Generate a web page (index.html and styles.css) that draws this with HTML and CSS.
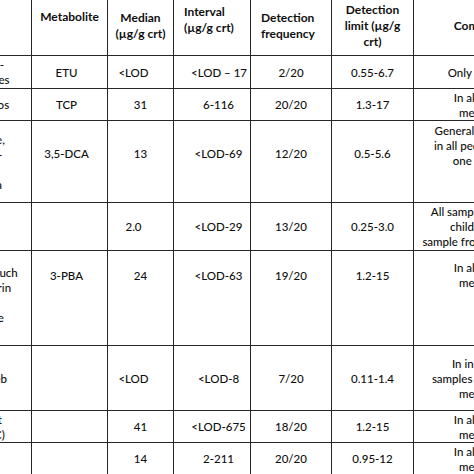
FILE: index.html
```html
<!DOCTYPE html>
<html>
<head>
<meta charset="utf-8">
<link rel="stylesheet" href="styles.css">
</head>
<body>
<table class="results">
  <colgroup>
    <col class="c-source"><col class="c-metab"><col class="c-median"><col class="c-interval"><col class="c-freq"><col class="c-limit"><col class="c-note">
  </colgroup>
  <thead>
    <tr class="head">
      <th class="lead">Pesticide</th>
      <th class="h-top">Metabolite</th>
      <th>Median<br>(µg/g crt)</th>
      <th class="h-interval">Interval<br>(µg/g crt)</th>
      <th class="h-freq">Detection<br>frequency</th>
      <th>Detection<br>limit (µg/g<br>crt)</th>
      <th class="note">Comments</th>
    </tr>
  </thead>
  <tbody>
    <tr class="r1">
      <td class="lead">Ethylenebis-di-<br>dithiocarbamates</td>
      <td class="metab">ETU</td>
      <td class="median-lod">&lt;LOD</td>
      <td class="interval">&lt;LOD – 17</td>
      <td>2/20</td>
      <td>0.55-6.7</td>
      <td class="note">Only in adults</td>
    </tr>
    <tr class="r2">
      <td class="lead lead-shift">Chlorpyrifos</td>
      <td class="metab">TCP</td>
      <td>31</td>
      <td class="interval">6-116</td>
      <td>20/20</td>
      <td>1.3-17</td>
      <td class="note">In all family<br>members</td>
    </tr>
    <tr class="r3">
      <td class="lead">a procymidone,<br>and vinclozoli-<br>n, used<br>in Scandinavia</td>
      <td class="metab">3,5-DCA</td>
      <td>13</td>
      <td class="interval">&lt;LOD-69</td>
      <td>12/20</td>
      <td>0.5-5.6</td>
      <td class="note">Generally detected<br>in all people except<br>one person.</td>
    </tr>
    <tr class="r4">
      <td class="lead"></td>
      <td class="metab"></td>
      <td class="median-lod">2.0</td>
      <td class="interval">&lt;LOD-29</td>
      <td>13/20</td>
      <td>0.25-3.0</td>
      <td class="note">All samples from the<br>children, one<br>sample from one parent</td>
    </tr>
    <tr class="r5">
      <td class="lead">the pyrethroids such<br>as a cypermethrin<br>etc. are<br>is in the source</td>
      <td class="metab">3-PBA</td>
      <td>24</td>
      <td class="interval">&lt;LOD-63</td>
      <td>19/20</td>
      <td>1.2-15</td>
      <td class="note">In all family<br>members</td>
    </tr>
    <tr class="r6">
      <td class="lead">and/or propineb</td>
      <td class="metab"></td>
      <td class="median-lod">&lt;LOD</td>
      <td class="interval">&lt;LOD-8</td>
      <td>7/20</td>
      <td>0.11-1.4</td>
      <td class="note">In individual<br>samples from family<br>members</td>
    </tr>
    <tr class="r7">
      <td class="lead">In the product<br>(excl. the pTCC)</td>
      <td class="metab"></td>
      <td>41</td>
      <td class="interval">&lt;LOD-675</td>
      <td>18/20</td>
      <td>1.2-15</td>
      <td class="note">In all family<br>members</td>
    </tr>
    <tr class="r8">
      <td class="lead"></td>
      <td class="metab"></td>
      <td>14</td>
      <td class="interval">2-211</td>
      <td>20/20</td>
      <td>0.95-12</td>
      <td class="note">In all family<br>members</td>
    </tr>
  </tbody>
</table>
</body>
</html>
```
FILE: styles.css
```css
html, body {
  margin: 0;
  padding: 0;
  background: #ffffff;
  overflow: hidden;
}

.results {
  border-collapse: collapse;
  table-layout: fixed;
  width: 651px;
  margin: -5px 0 0 -100px;
  font-family: Lato, "Open Sans", sans-serif;
  font-size: 11.5px;
  font-weight: 500;
  color: #0f0f0f;
}

.c-source { width: 131px; }
.c-metab { width: 76px; }
.c-median { width: 66px; }
.c-interval { width: 77px; }
.c-freq { width: 81px; }
.c-limit { width: 82px; }
.c-note { width: 138px; }

.results th,
.results td {
  border: 1px solid #262626;
  padding: 0 4px;
  text-align: center;
  vertical-align: middle;
  line-height: 15px;
  white-space: nowrap;
}

.results th {
  font-weight: 700;
  font-size: 12px;
  line-height: 16px;
}

.head { height: 60px; }
.results th.h-top { vertical-align: top; padding-top: 13px; }
.results th.h-interval { text-align: left; vertical-align: top; padding: 8px 4px 0 10px; }
.results th.h-freq { text-align: left; padding-left: 10px; }

.results td.metab { padding-right: 10px; }
.results td.interval { padding-left: 17px; }
.results td.median-lod { padding-right: 18px; }
.results td.lead-shift { padding-left: 28px; }

.r1 { height: 33px; }
.r2 { height: 32px; }
.r3 { height: 82px; }
.r4 { height: 48px; }
.r5 { height: 95px; }
.r6 { height: 65px; }
.r7 { height: 32px; }
.r8 { height: 32px; }

.r3 td { vertical-align: top; padding-top: 25px; }
.r3 td.lead { vertical-align: middle; padding-top: 0; }
.r3 td.note { padding-top: 2px; }

.r5 td { vertical-align: top; padding-top: 17px; }
.r5 td.lead { padding-top: 14px; }
.r5 td.note { padding-top: 9px; }
```
